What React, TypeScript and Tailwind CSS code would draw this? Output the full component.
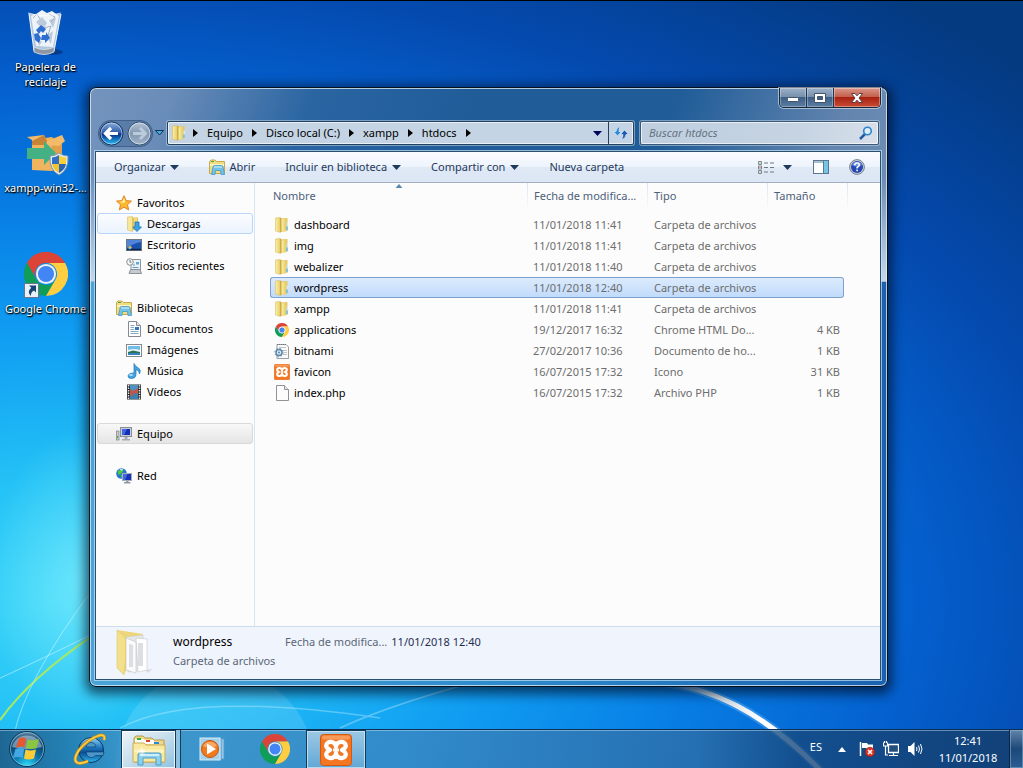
import type { ReactNode } from "react";

/* ---------- Icons ---------- */

function ChromeIcon({ size }: { size: number }) {
  return (
    <svg width={size} height={size} viewBox="0 0 48 48" className="shrink-0">
      <path d="M3.2 12A24 24 0 0 1 44.8 12H24A12 12 0 0 0 13.6 30Z" fill="#db4437" />
      <path d="M3.2 12L13.6 30A12 12 0 0 0 34.4 30L24 48A24 24 0 0 1 3.2 12Z" fill="#0f9d58" />
      <path d="M44.8 12A24 24 0 0 1 24 48L34.4 30A12 12 0 0 0 24 12Z" fill="#ffcd40" />
      <circle cx="24" cy="24" r="11" fill="#f1f1f1" />
      <circle cx="24" cy="24" r="8.8" fill="#4285f4" />
    </svg>
  );
}

function XamppIcon({ size }: { size: number }) {
  return (
    <svg width={size} height={size} viewBox="0 0 32 32" className="shrink-0">
      <rect x="0.5" y="0.5" width="31" height="31" rx="3" fill="#f37623" stroke="#d9560b" />
      <rect x="2" y="1.5" width="28" height="4" rx="2" fill="#f79a5a" />
      <path
        d="M16 13C16.500 6.500 25.500 6.500 25.800 11.500C25.800 14.500 23.500 15 22 16C23.500 17 25.800 17.800 25.800 20.500C25.500 25.500 16.500 25.500 16 19C15.500 25.500 6.500 25.500 6.200 20.500C6.200 17.800 8.500 17 10 16C8.500 15 6.200 14.500 6.200 11.500C6.500 6.500 15.500 6.500 16 13Z"
        fill="none"
        stroke="#fff"
        strokeWidth="4.200"
        strokeLinejoin="round"
      />
      <path d="M13 16H19" stroke="#fff" strokeWidth="3" />
    </svg>
  );
}

function RecycleBinIcon() {
  return (
    <svg width="48" height="48" viewBox="0 0 48 48">
      <ellipse cx="30" cy="44" rx="11" ry="3" fill="#00205a" opacity="0.5" />
      <path d="M7 6L12 43Q22 48 32 43L39 6Z" fill="#c3d2e2" opacity="0.9" />
      <path d="M9 8L14 38L31 39L37 8L30 3L25 5L20 2L14 6Z" fill="#eef3f8" />
      <path d="M14 14L20 9L25 15L21 22ZM27 12L34 10L31 20ZM24 28L31 23L29 36ZM15 30L20 34L17 38Z" fill="#bccbdb" />
      <path d="M11 10L15 6L18 11M27 6L33 9L29 14M22 20L29 18L26 27" stroke="#9fb3c9" fill="none" />
      <path d="M14 22L19 17L24 21L21 25L19 23L17 26ZM24 24L28 30L23 35V32H19L20 27H24ZM12 26L16 25L19 30L17 35L13 32Z" fill="#2f6fd0" />
      <path d="M7 6L12 43M39 6L32 43" stroke="#f4f9ff" strokeWidth="1" />
      <path d="M12 39Q22 44 32.500 39L32 44Q22 49 12 44Z" fill="#8d97a3" stroke="#dce3ea" strokeWidth="0.8" />
      <path d="M6 5Q22 10 39 5" stroke="#fff" opacity="0.8" fill="none" />
    </svg>
  );
}

function XamppSetupIcon() {
  return (
    <svg width="48" height="48" viewBox="0 0 48 48">
      <path d="M10 11L30 8V42L10 41Z" fill="#f0b45f" />
      <path d="M30 8L40 15V41L30 42Z" fill="#e0a04b" />
      <path d="M10 11L5 8L22 6L25 12L40 6L43 12L37 17L10 15Z" fill="#f3bb69" />
      <path d="M10 12L22 6L25 12L24 16H10Z" fill="#c68436" />
      <path d="M5 19H22V12L34 24L22 36V30H5Z" fill="#44b185" />
      <path d="M28 27Q33 27 37 24Q41 27 46 27Q47 41 37 46Q27 41 28 27Z" fill="#e5edf5" stroke="#7895ad" />
      <path d="M30 28.500Q34 28 37 26V35H30Z" fill="#2f6fc4" />
      <path d="M37 26Q40 28.500 44.500 28.500L44 35H37Z" fill="#f6cf39" />
      <path d="M30 35H37V44Q31 41 30 35Z" fill="#f2c42e" />
      <path d="M37 35H44Q43 41 37 44Z" fill="#2a62b6" />
    </svg>
  );
}

function FolderIcon() {
  return (
    <svg width="16" height="16" viewBox="0 0 16 16" className="shrink-0">
      <defs>
        <linearGradient id="folderFront">
          <stop offset="0" stopColor="#fbf0a8" />
          <stop offset="1" stopColor="#e6ca62" />
        </linearGradient>
      </defs>
      <path d="M6 1.500L13.500 1V14L6 15Z" fill="#e5c765" />
      <path d="M1.500 1L6.500 .5V15.500L1.500 14Z" fill="url(#folderFront)" stroke="#d4b253" strokeWidth=".5" />
      <path d="M7.500 2.500L12 1.500V14L7.500 14.500Z" fill="url(#folderFront)" />
      <path d="M6.800 1V15" stroke="#c4a548" />
      <path d="M12.500 5L14 6V13L12.500 14Z" fill="#d4e8f0" />
      <path d="M13 9.500V13" stroke="#38a2d8" />
    </svg>
  );
}

function LibraryIcon() {
  return (
    <svg width="16" height="16" viewBox="0 0 16 16" className="shrink-0">
      <path d="M.5 2.500L2 1H6L7.500 2.500H15.500V14.500H.5Z" fill="#f0dc82" stroke="#c8aa4c" />
      <path d="M2 2.500H5" stroke="#48a648" />
      <path d="M1 6H15" stroke="#fbf3bd" strokeWidth="2" />
      <path d="M4 8Q4 6.500 5.500 6.500H12.500Q14 6.500 14 8L15.500 15.500H12L11.500 11.500H6.500L6 15.500H2.500Z" fill="#72c2ea" stroke="#3a91c2" strokeWidth=".7" />
      <path d="M5 8H13" stroke="#d8f2fc" />
    </svg>
  );
}

function StarIcon() {
  return (
    <svg width="16" height="16" viewBox="0 0 16 16">
      <path d="M8 .7L10.200 5.600L15.500 6.100L11.500 9.700L12.700 15L8 12.200L3.300 15L4.500 9.700L.5 6.100L5.800 5.600Z" fill="#fdb92e" stroke="#e3852b" />
      <path d="M8 3L9.300 6.600L8 8L3 7L6.500 6.500Z" fill="#fff0a8" />
    </svg>
  );
}

function DownloadsIcon() {
  return (
    <svg width="16" height="16" viewBox="0 0 16 16">
      <path d="M6 1.500H12V14H6Z" fill="#e0bf5c" />
      <path d="M1.500 1L6.500 .5V15.500L1.500 14Z" fill="#f8e795" stroke="#d4b253" strokeWidth=".5" />
      <path d="M8 2L11 1.500V13H8Z" fill="#f3dd84" />
      <path d="M9 6H13V11H15.500L11 15.500L6.800 11H9Z" fill="#38a3e5" stroke="#1b72b8" strokeWidth=".8" />
    </svg>
  );
}

function DesktopIcon() {
  return (
    <svg width="16" height="16" viewBox="0 0 16 16">
      <rect x=".5" y="2.500" width="15" height="11" fill="#1b52b2" stroke="#707782" />
      <path d="M1 3H15V5Q8 6 1 11Z" fill="#5284d8" />
      <path d="M1 12.500H15" stroke="#0c2448" strokeWidth="1.500" />
      <circle cx="4" cy="10.500" r="1.600" fill="#f0c73c" />
      <circle cx="3.500" cy="11.500" r="1" fill="#58b6ee" />
    </svg>
  );
}

function RecentIcon() {
  return (
    <svg width="16" height="16" viewBox="0 0 16 16">
      <path d="M5 1.500H14.500V12H5Z" fill="#eef2f5" stroke="#8d969d" />
      <path d="M3 15.500L4.500 11.500H14L15.500 15.500Z" fill="#c4cad0" stroke="#8b9298" />
      <rect x="10" y="4" width="3" height="2.500" fill="#5ba8db" />
      <path d="M6.500 9.500H12.500M7 7H9" stroke="#5c9acb" />
      <circle cx="4" cy="4" r="3.300" fill="#f2f4f6" stroke="#8c9399" />
      <path d="M4 2V4.200H5.500" stroke="#59626a" fill="none" strokeWidth=".8" />
    </svg>
  );
}

function DocumentIcon() {
  return (
    <svg width="16" height="16" viewBox="0 0 16 16">
      <path d="M2.500 .5H10.500L14.500 4.500V15.500H2.500Z" fill="#fff" stroke="#868b91" />
      <path d="M10.500 .5V4.500H14.500" fill="#e3e7ec" stroke="#868b91" />
      <path d="M4.500 4.500H8.500M4.500 6.500H8M4.500 8.500H8M4.500 10.500H12.500M4.500 12.500H12.500" stroke="#8aa9c6" />
      <rect x="9" y="6" width="4" height="3" fill="#3277be" />
    </svg>
  );
}

function PicturesIcon() {
  return (
    <svg width="16" height="16" viewBox="0 0 16 16">
      <rect x=".5" y="2.500" width="15" height="12" fill="#fff" stroke="#868b91" />
      <rect x="2" y="4" width="12" height="9" fill="#70bdea" />
      <path d="M2 8Q8 6 14 8V10H2Z" fill="#e4f3f8" />
      <path d="M2 10L7 8.500L14 10V11H2Z" fill="#2b7352" />
      <path d="M2 11H14V13H2Z" fill="#3484bc" />
    </svg>
  );
}

function MusicIcon() {
  return (
    <svg width="16" height="16" viewBox="0 0 16 16">
      <path d="M8 0.500Q9.500 4 12.500 5Q15.500 7 13.500 11Q13.500 7.500 10 6.500V12Q9.500 15.500 5.500 15.500Q2 15.500 2 13Q2.500 10 8 10Z" fill="#42a5e2" stroke="#1b75b8" strokeWidth=".7" />
      <ellipse cx="5" cy="12" rx="2" ry="1" fill="#a9dcf6" />
    </svg>
  );
}

function VideosIcon() {
  return (
    <svg width="16" height="16" viewBox="0 0 16 16">
      <rect x="1" y=".5" width="14" height="15" fill="#27292d" />
      <path d="M2.500 1V15M13.500 1V15" stroke="#e8e9ea" strokeWidth="1.500" strokeDasharray="1.500 1" />
      <rect x="4" y="1" width="8" height="6" fill="#4c92c4" />
      <rect x="4" y="8" width="8" height="7" fill="#3d7fb1" />
      <path d="M4 5L7 7L12 4V10L8 9L6 13L4 10Z" fill="#bd5946" />
    </svg>
  );
}

function ComputerIcon() {
  return (
    <svg width="16" height="16" viewBox="0 0 16 16">
      <rect x=".5" y="5" width="2.500" height="9" fill="#c5cad0" stroke="#7d848c" strokeWidth=".7" />
      <rect x="1" y="10" width="1" height="2" fill="#47aa39" />
      <rect x="4.500" y="1.500" width="11" height="9" fill="#c9ced6" stroke="#898f99" />
      <rect x="6" y="3" width="8" height="6" fill="#132fb5" />
      <path d="M6 3H11L8 9H6Z" fill="#4268e0" />
      <path d="M8.500 11H11.500V13H14V14.500H6V13H8.500Z" fill="#a7acb4" />
    </svg>
  );
}

function NetworkIcon() {
  return (
    <svg width="16" height="16" viewBox="0 0 16 16">
      <circle cx="5.500" cy="5.500" r="5.300" fill="#2077cf" />
      <path d="M1.500 3L5.500 1L7.500 3L4.500 6L2.500 7ZM4.500 7L7.500 6L8.500 9L5.500 10Z" fill="#57c43d" />
      <path d="M3.500 1L7.500 .8L5.500 3Z" fill="#bdebf5" />
      <rect x="6.500" y="5.500" width="9" height="7" fill="#1532b8" stroke="#a4aebb" />
      <path d="M7 6H11.500L9 12H7Z" fill="#4469df" />
      <path d="M10 13H12.500V14H14.500V15.500H8V14H10Z" fill="#9299a3" />
    </svg>
  );
}

function ConfigFileIcon() {
  return (
    <svg width="16" height="16" viewBox="0 0 16 16" className="shrink-0">
      <path d="M3 1.500H12L14.500 4V15.500H3Z" fill="#fbfbfb" stroke="#999ea3" />
      <path d="M3 1.500H13" stroke="#6f757b" strokeDasharray="1 1" />
      <path d="M5 4.500H12M9 7.500H13M10 9.500H13M9 11.500H13" stroke="#bfc5ca" />
      <circle cx="5" cy="9.500" r="3" fill="#e1edf6" stroke="#5c86a9" strokeWidth="1.500" />
      <circle cx="5" cy="9.500" r="4.200" fill="none" stroke="#5c86a9" strokeDasharray="1.300 2" />
      <circle cx="5" cy="9.500" r="1" fill="#5c86a9" />
    </svg>
  );
}

function BlankFileIcon() {
  return (
    <svg width="16" height="16" viewBox="0 0 16 16" className="shrink-0">
      <path d="M2.500 .5H10.500L14.500 4.500V15.500H2.500Z" fill="#fcfcfc" stroke="#8f9397" />
      <path d="M10.500 .5V4.500H14.500" fill="#e9e9e9" stroke="#8f9397" />
    </svg>
  );
}

function BigFolderIcon() {
  return (
    <svg width="38" height="46" viewBox="0 0 38 46">
      <path d="M30 40L37 39L31 43Z" fill="#d4d8df" />
      <path d="M1 0L27 4V12L8 44Z" fill="#ecd679" />
      <path d="M10 7L27 5L29 40L12 42Z" fill="#e4e6e9" stroke="#c9cbce" strokeWidth=".5" />
      <path d="M20 8L31 9V40L22 42Z" fill="#fff" stroke="#c4c7cb" strokeWidth=".6" />
      <path d="M10 8L20 12V43L10 40Z" fill="#fbfbfb" stroke="#bfc2c6" strokeWidth=".6" />
      <path d="M22 13H27V36H22ZM13 14L17 15V37H13Z" fill="#dcdee1" />
      <path d="M1 0L9 7Q10 8 9.500 30L8 45L1 38Z" fill="#f4e08c" stroke="#e0c768" strokeWidth=".6" />
    </svg>
  );
}

function Caret({ className = "fill-[#1e395b]" }: { className?: string }) {
  return (
    <svg width="9" height="5" viewBox="0 0 9 5" className={className}>
      <path d="M0 0H9L4.500 5Z" />
    </svg>
  );
}

function StartOrb() {
  return (
    <svg width="40" height="38" viewBox="0 0 40 38">
      <defs>
        <radialGradient id="orb" cx=".5" cy="1" r="1">
          <stop offset="0" stopColor="#2ee4ff" />
          <stop offset=".4" stopColor="#0c74ac" />
          <stop offset=".7" stopColor="#10456f" />
          <stop offset="1" stopColor="#5e86a4" />
        </radialGradient>
      </defs>
      <circle cx="20" cy="19" r="17.500" fill="url(#orb)" stroke="#0c3554" />
      <circle cx="20" cy="19" r="16.500" fill="none" stroke="#8ac7e2" strokeOpacity=".7" />
      <path d="M5 17A15.500 15.500 0 0 1 35 17Q20 21 5 17Z" fill="#dbe9f2" opacity=".45" />
      <path d="M12 8.500Q15.500 6.500 19 8.500L17.500 17.500Q14 15.500 9 17.500Z" fill="#e8572d" />
      <path d="M20.500 9.200Q25.500 11.500 32 9L29.500 18Q24 20 19 18Z" fill="#8cc63e" />
      <path d="M8.500 19Q13.500 17 17.200 19L15.500 28Q12 26 6 28Z" fill="#44a8e6" />
      <path d="M18.500 19.500Q23 21.500 29 19.500L27 28.500Q21 30.500 17 28.500Z" fill="#fccb38" />
    </svg>
  );
}

function ExplorerTaskIcon() {
  return (
    <svg width="34" height="32" viewBox="0 0 34 32">
      <path d="M2 4L4 2H11L13 4H20L22 6H32V28H2Z" fill="#eed98a" stroke="#b7984a" />
      <path d="M3 5H12V9H3ZM12 6H22V10H12Z" fill="#fdfdf5" />
      <rect x="5" y="4" width="4" height="2" fill="#2bb23c" />
      <rect x="14" y="6" width="4" height="2" fill="#d84133" />
      <rect x="22" y="8" width="5" height="2" fill="#2b89d8" />
      <path d="M1 9H12L14 11H33V28H1Z" fill="#f8e99f" stroke="#c9ad5d" />
      <path d="M2 17H32" stroke="#fff8cf" strokeWidth="3" opacity=".7" />
      <path d="M6 21Q6 19 8 19H27Q29 19 29 21V31H24V24H11V31H6Z" fill="#8bd0ee" stroke="#4c9ec6" />
      <path d="M8 21H27" stroke="#e4f8ff" strokeWidth="1.500" />
      <path d="M10 13V22M6 17.500H14M7.500 15L12.500 20M12.500 15L7.500 20" stroke="#fff" strokeWidth=".8" />
    </svg>
  );
}

function InternetExplorerIcon() {
  return (
    <svg width="34" height="32" viewBox="0 0 34 32">
      <defs>
        <linearGradient id="ie" x2="0" y2="1">
          <stop offset="0" stopColor="#8fd4f5" />
          <stop offset=".4" stopColor="#1d78bd" />
          <stop offset=".6" stopColor="#0c4e93" />
          <stop offset="1" stopColor="#2ab5ee" />
        </linearGradient>
      </defs>
      <circle cx="18" cy="17" r="12.500" fill="url(#ie)" stroke="#0a3664" />
      <path d="M13 14Q14 9.500 18 9.500Q22 9.500 23 14Z" fill="#4a96c8" stroke="#0a3664" strokeWidth=".6" />
      <path d="M31 19H13Q14 24.500 18.500 24.500Q21 24.500 22.500 22.500H30Z" fill="#4a96c8" stroke="#0a3664" strokeWidth=".6" />
      <path d="M31 7Q33 1 26 2.500Q15 6 6 17Q-1 28 5 30Q9 31 15 28" fill="none" stroke="#c98b12" strokeWidth="3.200" />
      <path d="M31 7Q33 1 26 2.500Q15 6 6 17Q-1 28 5 30Q9 31 15 28" fill="none" stroke="#ffcf45" strokeWidth="1.800" />
    </svg>
  );
}

function MediaPlayerIcon() {
  return (
    <svg width="30" height="26" viewBox="0 0 30 26">
      <path d="M22 3H25V23H22ZM18 2H22V24H18Z" fill="#8fc5e8" stroke="#5b9cc9" strokeWidth=".7" />
      <rect x="1" y="2" width="20" height="22" fill="#a4d0ec" stroke="#d3ebf8" />
      <circle cx="11" cy="13" r="8.500" fill="#f27a1d" stroke="#c9560c" />
      <path d="M4 10A8 8 0 0 1 18 10Q11 13 4 10Z" fill="#f9a863" />
      <path d="M8 7.500L17 13L8 18.500Z" fill="#fff" />
    </svg>
  );
}

/* ---------- Desktop ---------- */

function Wallpaper() {
  return (
    <svg className="absolute inset-0 h-full w-full" viewBox="0 0 1023 768" preserveAspectRatio="none">
      <defs>
        <radialGradient id="sky" gradientUnits="userSpaceOnUse" cx="0" cy="0" r="1" gradientTransform="translate(60 600) scale(1300 790)">
          <stop offset="0" stopColor="#3ed6f8" />
          <stop offset=".15" stopColor="#24c2f6" />
          <stop offset=".34" stopColor="#109df2" />
          <stop offset=".5" stopColor="#077de4" />
          <stop offset=".66" stopColor="#045fcd" />
          <stop offset=".8" stopColor="#0449ad" />
          <stop offset="1" stopColor="#043a80" />
        </radialGradient>
        <linearGradient id="arc" gradientUnits="userSpaceOnUse" x1="665" y1="0" x2="760" y2="0">
          <stop offset="0" stopColor="#fff" stopOpacity="0" />
          <stop offset=".5" stopColor="#ffeede" stopOpacity=".75" />
          <stop offset="1" stopColor="#fff" />
        </linearGradient>
        <radialGradient id="glow">
          <stop offset="0" stopColor="#8df2ff" stopOpacity=".55" />
          <stop offset="1" stopColor="#8df2ff" stopOpacity="0" />
        </radialGradient>
      </defs>
      <rect width="1023" height="768" fill="url(#sky)" />
      <ellipse cx="80" cy="580" rx="90" ry="150" fill="url(#glow)" />
      <circle cx="215" cy="768" r="100" fill="#c9f3ff" opacity=".16" />
      <path d="M0 720Q30 678 92 636" stroke="#a4e866" strokeWidth="2" fill="none" />
      <path d="M0 678Q50 655 92 634M14 735Q25 680 92 590" stroke="#c8f6ff" strokeOpacity=".6" fill="none" />
      <path d="M120 728Q190 690 380 718M340 728Q400 700 520 670" stroke="#d4f5ff" strokeOpacity=".35" strokeWidth="1.500" fill="none" />
      <path d="M660 682C710 688 762 710 822 772" fill="none" stroke="#7cc4ff" strokeOpacity=".35" strokeWidth="9" />
      <path d="M660 682C710 688 762 710 822 772" fill="none" stroke="url(#arc)" strokeWidth="5" />
    </svg>
  );
}

function DesktopShortcut({ label, children }: { label: string; children: ReactNode }) {
  return (
    <button className="flex h-[121px] w-full flex-col items-center gap-[3px] text-white">
      <span className="relative flex h-12 items-center justify-center">{children}</span>
      <span className="max-w-full whitespace-pre text-center leading-[15px] [text-shadow:0_1px_2px_#000,1px_1px_1px_#000]">
        {label}
      </span>
    </button>
  );
}

/* ---------- Explorer window ---------- */

const crumbs = ["Equipo", "Disco local (C:)", "xampp", "htdocs"];

function CrumbArrow() {
  return (
    <svg width="5" height="8" viewBox="0 0 5 8" className="shrink-0">
      <path d="M0 0L5 4L0 8Z" />
    </svg>
  );
}

function WindowControls() {
  return (
    <div className="flex h-5 justify-end">
      <div className="flex overflow-hidden rounded-b-[5px] border border-t-0 border-[#16293d] shadow-[0_0_0_1px_rgba(255,255,255,0.5)]">
        <button aria-label="Minimizar" className="flex w-[27px] items-end justify-center border-r border-[#1c3550] bg-[linear-gradient(#9db1c8_0%,#7891ae_45%,#3e5f85_50%,#5b7ea4_100%)] pb-[5px] shadow-[inset_0_0_0_1px_rgba(255,255,255,0.3)]">
          <svg width="12" height="5"><rect x=".5" y=".5" width="11" height="4" rx="1" fill="#fff" stroke="#455468" /></svg>
        </button>
        <button aria-label="Maximizar" className="flex w-[27px] items-center justify-center border-r border-[#1c3550] bg-[linear-gradient(#9db1c8_0%,#7891ae_45%,#3e5f85_50%,#5b7ea4_100%)] shadow-[inset_0_0_0_1px_rgba(255,255,255,0.3)]">
          <svg width="12" height="10"><path d="M.5 .5H11.500V9.500H.5ZM3.500 3.500V6.500H8.500V3.500Z" fill="#fff" fillRule="evenodd" stroke="#455468" /></svg>
        </button>
        <button aria-label="Cerrar" className="flex w-[46px] items-center justify-center bg-[linear-gradient(#d9988a_0%,#c4604e_45%,#a82212_50%,#c94c35_100%)] shadow-[inset_0_0_0_1px_rgba(255,255,255,0.35)]">
          <svg width="12" height="10"><path d="M.5 .5H4L6 2.800L8 .5H11.500L8 5L11.500 9.500H8L6 7.200L4 9.500H.5L4 5Z" fill="#fff" stroke="#5a3c43" /></svg>
        </button>
      </div>
    </div>
  );
}

function NavigationBar() {
  return (
    <div className="flex h-[26px] items-center pl-1">
      <div className="flex items-center gap-[3px] rounded-full bg-[#4c719c]/60 shadow-[0_0_0_1px_rgba(20,50,90,0.5)]">
        <button aria-label="Atrás">
          <svg width="25" height="25" viewBox="0 0 25 25">
            <defs>
              <linearGradient id="back" x2="0" y2="1">
                <stop offset="0" stopColor="#8eb0dd" />
                <stop offset=".48" stopColor="#2a58a8" />
                <stop offset=".52" stopColor="#0a2c83" />
                <stop offset="1" stopColor="#25c5ff" />
              </linearGradient>
            </defs>
            <circle cx="12.500" cy="12.500" r="11.500" fill="url(#back)" stroke="#142d55" />
            <circle cx="12.500" cy="12.500" r="10.500" fill="none" stroke="#c5ddf5" strokeOpacity=".7" />
            <path d="M19 12.500H7M12 7L6.500 12.500L12 18" stroke="#fff" strokeWidth="3.200" fill="none" />
          </svg>
        </button>
        <button aria-label="Adelante">
          <svg width="25" height="25" viewBox="0 0 25 25">
            <defs>
              <linearGradient id="forward" x2="0" y2="1">
                <stop offset="0" stopColor="#b3c3d6" />
                <stop offset=".5" stopColor="#8298b1" />
                <stop offset="1" stopColor="#a1b4ca" />
              </linearGradient>
            </defs>
            <circle cx="12.500" cy="12.500" r="11.500" fill="url(#forward)" stroke="#30506f" />
            <circle cx="12.500" cy="12.500" r="10.500" fill="none" stroke="#d8e4ef" strokeOpacity=".8" />
            <path d="M6 12.500H18M13 7L18.500 12.500L13 18" stroke="#bccbdc" strokeWidth="3" fill="none" />
          </svg>
        </button>
      </div>
      <button aria-label="Páginas recientes" className="ml-[3px]">
        <svg width="9" height="6" viewBox="0 0 9 6"><path d="M.5 .5H8.500L4.500 5Z" fill="#45aee0" stroke="#0d3157" /></svg>
      </button>
      <div className="ml-[3px] flex h-6 flex-[471] items-stretch rounded-[2px] border border-[#24405c] bg-[#c4d4e4] shadow-[0_0_0_1px_rgba(190,215,235,0.55),inset_0_0_0_1px_rgba(255,255,255,0.65)]">
        <div className="flex flex-1 items-center gap-[6px] pl-[3px]">
          <FolderIcon />
          <div className="flex items-center gap-[9px]">
            <CrumbArrow />
            {crumbs.map((crumb) => (
              <span key={crumb} className="flex items-center gap-[9px] whitespace-nowrap">
                <button>{crumb}</button>
                <CrumbArrow />
              </span>
            ))}
          </div>
        </div>
        <button aria-label="Ubicaciones anteriores" className="px-[6px]"><Caret className="fill-[#02025c]" /></button>
        <button aria-label="Actualizar" className="flex w-[25px] items-center justify-center border-l border-[#24405c]">
          <svg width="16" height="14" viewBox="0 0 16 14">
            <path d="M7.500 .5Q3.500 1 3 5.500H.5L4.500 10L8.500 5.500H6Q6 2.500 7.500 .5Z" fill="#2c8bdb" stroke="#eaf3fb" strokeWidth=".6" />
            <path d="M8.500 13.500Q12.500 13 13 8.500H15.500L11.500 4L7.500 8.500H10Q10 11.500 8.500 13.500Z" fill="#1d58b0" stroke="#eaf3fb" strokeWidth=".6" />
          </svg>
        </button>
      </div>
      <label className="ml-[6px] mr-[2px] flex h-6 flex-[235] items-center rounded-[2px] border border-[#3c5875] bg-[linear-gradient(100deg,#bfcfe0_0%,#c5d3e2_65%,#d7dfea_100%)] pr-[5px] shadow-[0_0_0_1px_rgba(190,215,235,0.55),inset_0_0_0_1px_rgba(255,255,255,0.65)]">
        <input
          type="text"
          aria-label="Buscar htdocs"
          placeholder="Buscar htdocs"
          className="w-full min-w-0 bg-transparent pl-2 italic outline-none placeholder:text-[#66727f]"
        />
        <svg width="14" height="14" viewBox="0 0 14 14" className="shrink-0">
          <path d="M1 13L6 8" stroke="#245aa8" strokeWidth="2.500" />
          <circle cx="8.500" cy="5" r="3.800" fill="#dceefa" stroke="#2d83cc" strokeWidth="1.600" />
        </svg>
      </label>
    </div>
  );
}

function Toolbar() {
  return (
    <div className="flex h-[31px] shrink-0 items-center border-b border-[#a0afc3] bg-[linear-gradient(#fafcff_0%,#eef4fc_48%,#dfe9f6_52%,#dce6f4_100%)] pl-[18px] pr-[15px] text-[#1e395b]">
      <div className="flex flex-1 items-center gap-[30px] whitespace-nowrap">
        <button className="flex items-center gap-[5px]">Organizar <Caret /></button>
        <button className="flex items-center gap-1"><LibraryIcon /> Abrir</button>
        <button className="flex items-center gap-[5px]">Incluir en biblioteca <Caret /></button>
        <button className="flex items-center gap-[5px]">Compartir con <Caret /></button>
        <button>Nueva carpeta</button>
      </div>
      <button aria-label="Cambiar la vista">
        <svg width="17" height="13" viewBox="0 0 17 13">
          <path d="M.5 .5H3.500V3.500H.5ZM.5 5H3.500V8H.5ZM.5 9.500H3.500V12.500H.5Z" fill="#fff" stroke="#7c8793" />
          <path d="M6 2H10M12 2H16M6 6.500H10M12 6.500H16M6 11H10M12 11H16" stroke="#6b7a8a" />
          <path d="M1.500 2H2.500M1.500 11H2.500" stroke="#389238" />
          <path d="M1.500 6.500H2.500" stroke="#cc3a2b" />
        </svg>
      </button>
      <button aria-label="Más opciones" className="ml-2"><Caret /></button>
      <button aria-label="Panel de vista previa" className="ml-[21px]">
        <svg width="16" height="14" viewBox="0 0 16 14">
          <rect x=".5" y=".5" width="15" height="13" fill="#fff" stroke="#5b7690" />
          <path d="M1 2H15" stroke="#a9bfd2" strokeWidth="2" />
          <rect x="11" y="1" width="4" height="12" fill="#77c5e4" />
          <path d="M10.500 1V13" stroke="#5b7690" />
        </svg>
      </button>
      <button aria-label="Ayuda" className="ml-5">
        <svg width="16" height="16" viewBox="0 0 16 16">
          <circle cx="8" cy="8" r="7.400" fill="#c9ced8" stroke="#7b818e" />
          <circle cx="8" cy="8" r="6" fill="#2449b5" />
          <path d="M3 6A5.500 5.500 0 0 1 13 6Q8 9 3 6Z" fill="#6e92e0" />
          <path d="M5.800 6.200Q5.800 4 8 4Q10.300 4 10.300 6Q10.300 7.200 8.100 8.500V9.500" stroke="#fff" strokeWidth="1.500" fill="none" />
          <rect x="7.300" y="10.600" width="1.600" height="1.600" fill="#fff" />
        </svg>
      </button>
    </div>
  );
}

interface TreeItem {
  label: string;
  icon: ReactNode;
  state?: "hover" | "selected";
}

interface TreeGroup extends TreeItem {
  items: TreeItem[];
}

const tree: TreeGroup[] = [
  {
    label: "Favoritos",
    icon: <StarIcon />,
    items: [
      { label: "Descargas", icon: <DownloadsIcon />, state: "hover" },
      { label: "Escritorio", icon: <DesktopIcon /> },
      { label: "Sitios recientes", icon: <RecentIcon /> },
    ],
  },
  {
    label: "Bibliotecas",
    icon: <LibraryIcon />,
    items: [
      { label: "Documentos", icon: <DocumentIcon /> },
      { label: "Imágenes", icon: <PicturesIcon /> },
      { label: "Música", icon: <MusicIcon /> },
      { label: "Vídeos", icon: <VideosIcon /> },
    ],
  },
  { label: "Equipo", icon: <ComputerIcon />, state: "selected", items: [] },
  { label: "Red", icon: <NetworkIcon />, items: [] },
];

function TreeRow({ item, nested }: { item: TreeItem; nested?: boolean }) {
  const state =
    item.state === "hover"
      ? "border-[#b8d6fb] bg-linear-to-b from-[#fbfcfe] to-[#ebf3fd]"
      : item.state === "selected"
        ? "border-[#d9d9d9] bg-linear-to-b from-[#f8f8f8] to-[#e5e5e5]"
        : "border-transparent";
  return (
    <a href="#" className={`flex h-[21px] items-center gap-[5px] rounded-[3px] border ${state} ${nested ? "pl-7" : "pl-[18px]"}`}>
      {item.icon}
      <span>{item.label}</span>
    </a>
  );
}

function NavigationPane() {
  return (
    <nav className="flex w-[159px] shrink-0 flex-col gap-[21px] border-r border-[#d6e5f5] px-px pt-[9px]">
      {tree.map((group) => (
        <div key={group.label}>
          <TreeRow item={group} />
          {group.items.map((item) => (
            <TreeRow key={item.label} item={item} nested />
          ))}
        </div>
      ))}
    </nav>
  );
}

const files = [
  { name: "dashboard", icon: <FolderIcon />, date: "11/01/2018 11:41", type: "Carpeta de archivos", size: "" },
  { name: "img", icon: <FolderIcon />, date: "11/01/2018 11:41", type: "Carpeta de archivos", size: "" },
  { name: "webalizer", icon: <FolderIcon />, date: "11/01/2018 11:40", type: "Carpeta de archivos", size: "" },
  { name: "wordpress", icon: <FolderIcon />, date: "11/01/2018 12:40", type: "Carpeta de archivos", size: "" },
  { name: "xampp", icon: <FolderIcon />, date: "11/01/2018 11:41", type: "Carpeta de archivos", size: "" },
  { name: "applications", icon: <ChromeIcon size={14} />, date: "19/12/2017 16:32", type: "Chrome HTML Do...", size: "4 KB" },
  { name: "bitnami", icon: <ConfigFileIcon />, date: "27/02/2017 10:36", type: "Documento de ho...", size: "1 KB" },
  { name: "favicon", icon: <XamppIcon size={16} />, date: "16/07/2015 17:32", type: "Icono", size: "31 KB" },
  { name: "index.php", icon: <BlankFileIcon />, date: "16/07/2015 17:32", type: "Archivo PHP", size: "1 KB" },
];

const headCell =
  "relative h-[31px] bg-[linear-gradient(#d9e5f1,#fcfcfc)] bg-[size:1px_27px] bg-right-top bg-no-repeat pb-[5px] text-left font-normal text-[#4c607a]";

function FileList() {
  return (
    <div className="min-w-0 flex-1 overflow-hidden pl-[15px]">
      <table className="w-[578px] table-fixed border-separate border-spacing-0 whitespace-nowrap">
        <colgroup>
          <col className="w-[258px]" />
          <col className="w-[120px]" />
          <col className="w-[120px]" />
          <col className="w-[76px]" />
          <col className="w-1" />
        </colgroup>
        <thead>
          <tr>
            <th className={`${headCell} pl-[3px]`}>
              Nombre
              <svg width="7" height="4" className="absolute left-1/2 top-px -translate-x-1/2"><path d="M0 4L3.500 0L7 4Z" fill="#5b89ac" /></svg>
            </th>
            <th className={`${headCell} pl-[6px]`}>Fecha de modifica...</th>
            <th className={`${headCell} pl-[6px]`}>Tipo</th>
            <th colSpan={2} className={`${headCell} pl-[6px]`}>Tamaño</th>
          </tr>
        </thead>
        <tbody className="text-[#6d6d6d]">
          {files.map((file) => {
            const selected = file.name === "wordpress";
            const edge = selected ? "border-[#7da2ce] bg-linear-to-b from-[#dcebfc] to-[#c1dbfc]" : "border-transparent";
            return (
              <tr key={file.name} aria-selected={selected}>
                <td className={`h-[21px] rounded-l-[3px] border-y border-l pl-[3px] ${edge}`}>
                  <span className="flex items-center gap-1 text-black">
                    <span className="flex w-4 justify-center">{file.icon}</span>
                    {file.name}
                  </span>
                </td>
                <td className={`border-y pl-[5px] ${edge}`}>{file.date}</td>
                <td className={`border-y pl-[6px] ${edge}`}>{file.type}</td>
                <td className={`rounded-r-[3px] border-y border-r pr-[3px] text-right ${edge}`}>{file.size}</td>
                <td />
              </tr>
            );
          })}
        </tbody>
      </table>
    </div>
  );
}

function DetailsPane() {
  return (
    <div className="flex h-[53px] shrink-0 items-start border-t border-[#cfdcea] bg-[#f0f4fc] pl-5 pt-[3px]">
      <BigFolderIcon />
      <div className="ml-[19px] flex w-28 flex-col pt-[2px]">
        <span className="text-[12px] leading-[19px] text-black">wordpress</span>
        <span className="whitespace-nowrap leading-[19px] text-[#5a6779]">Carpeta de archivos</span>
      </div>
      <div className="flex gap-1 whitespace-nowrap pt-[2px] leading-[19px]">
        <span className="text-[#5a6779]">Fecha de modifica...</span>
        <span className="text-[#1e2f52]">11/01/2018 12:40</span>
      </div>
    </div>
  );
}

function ExplorerWindow() {
  return (
    <section
      className="absolute bottom-[42px] left-[89px] right-[135px] top-[86px] flex flex-col rounded-[7px] border border-[#06121f] bg-[linear-gradient(transparent_90px,rgba(225,240,250,0.75)_193px,transparent_194px),linear-gradient(110deg,#7494bd_0%,#698cb8_10%,#2a65a2_26%,#1f5c98_45%,#1f5c98_68%,#6284ae_88%,#7492b8_100%),linear-gradient(90deg,#4aa4d8_0%,#2f8ccc_50%,#1a62b0_100%)] bg-[size:100%_194px,100%_194px,100%_100%] bg-no-repeat px-[5px] pb-[6px] pr-[6px] shadow-[inset_0_0_0_1px_rgba(225,240,250,0.75),0_3px_12px_4px_rgba(0,10,30,0.65)]"
    >
      <WindowControls />
      <div className="pb-[5px] pt-3">
        <NavigationBar />
      </div>
      <div className="flex min-h-0 flex-1 flex-col border border-[#2b4f70] bg-[#fcfcfc] shadow-[0_0_0_1px_rgba(200,228,245,0.7)]">
        <Toolbar />
        <div className="flex min-h-0 flex-1">
          <NavigationPane />
          <FileList />
        </div>
        <DetailsPane />
      </div>
    </section>
  );
}

/* ---------- Taskbar ---------- */

function Taskbar() {
  return (
    <footer className="relative flex h-[39px] shrink-0 items-stretch border-t border-[#0b2f55] bg-[linear-gradient(90deg,rgba(30,88,130,0.85)_0%,rgba(38,112,160,0.75)_7%,rgba(62,140,192,0.8)_12%,rgba(55,135,195,0.85)_40%,rgba(42,110,170,0.85)_68%,rgba(22,72,125,0.8)_78%,rgba(20,62,108,0.85)_100%)] text-white shadow-[inset_0_1px_0_rgba(200,230,250,0.45)]">
      <button aria-label="Inicio" className="ml-[7px] w-10"><StartOrb /></button>
      <button aria-label="Internet Explorer" className="ml-[26px] w-[34px]"><InternetExplorerIcon /></button>
      <button aria-label="Explorador de Windows" className="ml-[14px] flex w-[55px] items-center justify-center border border-b-0 border-[#123c5c] bg-linear-to-br from-[#eef5fa] via-[#c5ddec] to-[#8fc2e0] shadow-[inset_0_0_0_1px_rgba(255,255,255,0.8)]">
        <ExplorerTaskIcon />
      </button>
      <span className="w-[5px] border-r border-[#123c5c] bg-[#8fc1e0]" />
      <button aria-label="Reproductor de Windows Media" className="ml-[18px] w-[30px]"><MediaPlayerIcon /></button>
      <button aria-label="Google Chrome" className="ml-[31px] w-[30px]"><ChromeIcon size={30} /></button>
      <button aria-label="XAMPP" className="ml-[16px] flex w-[60px] items-center justify-center border border-b-0 border-[#123c5c] bg-linear-to-b from-[#9cc8e4] to-[#62a8d6] shadow-[inset_0_0_0_1px_rgba(215,238,252,0.7)]">
        <XamppIcon size={32} />
      </button>
      <div className="ml-auto flex items-center">
        <button className="pb-1">ES</button>
        <button aria-label="Mostrar iconos ocultos" className="ml-4"><svg width="8" height="5"><path d="M0 5L4 0L8 5Z" fill="#fff" /></svg></button>
        <button aria-label="Centro de actividades" className="ml-[13px]">
          <svg width="16" height="16" viewBox="0 0 16 16">
            <path d="M1.500 1V15" stroke="#fff" strokeWidth="1.500" />
            <path d="M3 2H8L9 3.500H14V8H8L7 7H3Z" fill="#fff" />
            <circle cx="11" cy="11" r="4.700" fill="#dd3426" stroke="#8e150b" strokeWidth=".6" />
            <path d="M9 9L13 13M13 9L9 13" stroke="#fff" strokeWidth="1.600" />
          </svg>
        </button>
        <button aria-label="Red" className="ml-2">
          <svg width="16" height="16" viewBox="0 0 16 16">
            <path d="M5.500 3.500H15.500V11.500H5.500Z" fill="#234f7d" stroke="#fff" strokeWidth="1.300" />
            <path d="M10.500 12V14M6 14.500H15M.5 1.500V5H4.500V1.500M1.500 0V2M3.500 0V2M2.500 5V14H5" stroke="#fff" fill="none" strokeWidth="1.200" />
          </svg>
        </button>
        <button aria-label="Altavoces" className="ml-2">
          <svg width="16" height="16" viewBox="0 0 16 16">
            <path d="M1 5H3.500L7.500 1V15L3.500 11H1Z" fill="#fff" />
            <path d="M9.500 6Q10.500 8 9.500 10M11.500 4.500Q13.500 8 11.500 11.500M13.500 3Q16.500 8 13.500 13" stroke="#fff" fill="none" />
          </svg>
        </button>
        <time className="ml-[14px] w-[62px] text-center leading-[17px]">
          12:41
          <br />
          11/01/2018
        </time>
        <button aria-label="Mostrar escritorio" className="ml-[10px] h-full w-[14px] border-l border-[#0b2848] bg-linear-to-b from-[#6285a8] via-[#1c4879] to-[#2b5d92] shadow-[inset_0_0_0_1px_rgba(170,205,235,0.4)]" />
      </div>
    </footer>
  );
}

export default function App() {
  return (
    <div className="relative flex h-screen min-h-[500px] flex-col overflow-hidden border-t border-black font-['Noto_Sans','Open_Sans',sans-serif] text-[11px] leading-4 text-black">
      <Wallpaper />
      <main className="relative min-h-0 flex-1">
        <div className="flex w-[91px] flex-col pt-[7px]">
          <DesktopShortcut label={"Papelera de\nreciclaje"}><RecycleBinIcon /></DesktopShortcut>
          <DesktopShortcut label="xampp-win32-..."><XamppSetupIcon /></DesktopShortcut>
          <DesktopShortcut label="Google Chrome">
            <ChromeIcon size={44} />
            <svg width="15" height="15" viewBox="0 0 15 15" className="absolute bottom-0 left-0">
              <rect x=".5" y=".5" width="14" height="14" fill="#e9f0f7" stroke="#68788a" />
              <path d="M5 2.500H12V9.500L10 7.500Q6.500 9 7 13Q2.500 9 7.300 4.800Z" fill="#1b4474" />
            </svg>
          </DesktopShortcut>
        </div>
        <ExplorerWindow />
      </main>
      <Taskbar />
    </div>
  );
}
